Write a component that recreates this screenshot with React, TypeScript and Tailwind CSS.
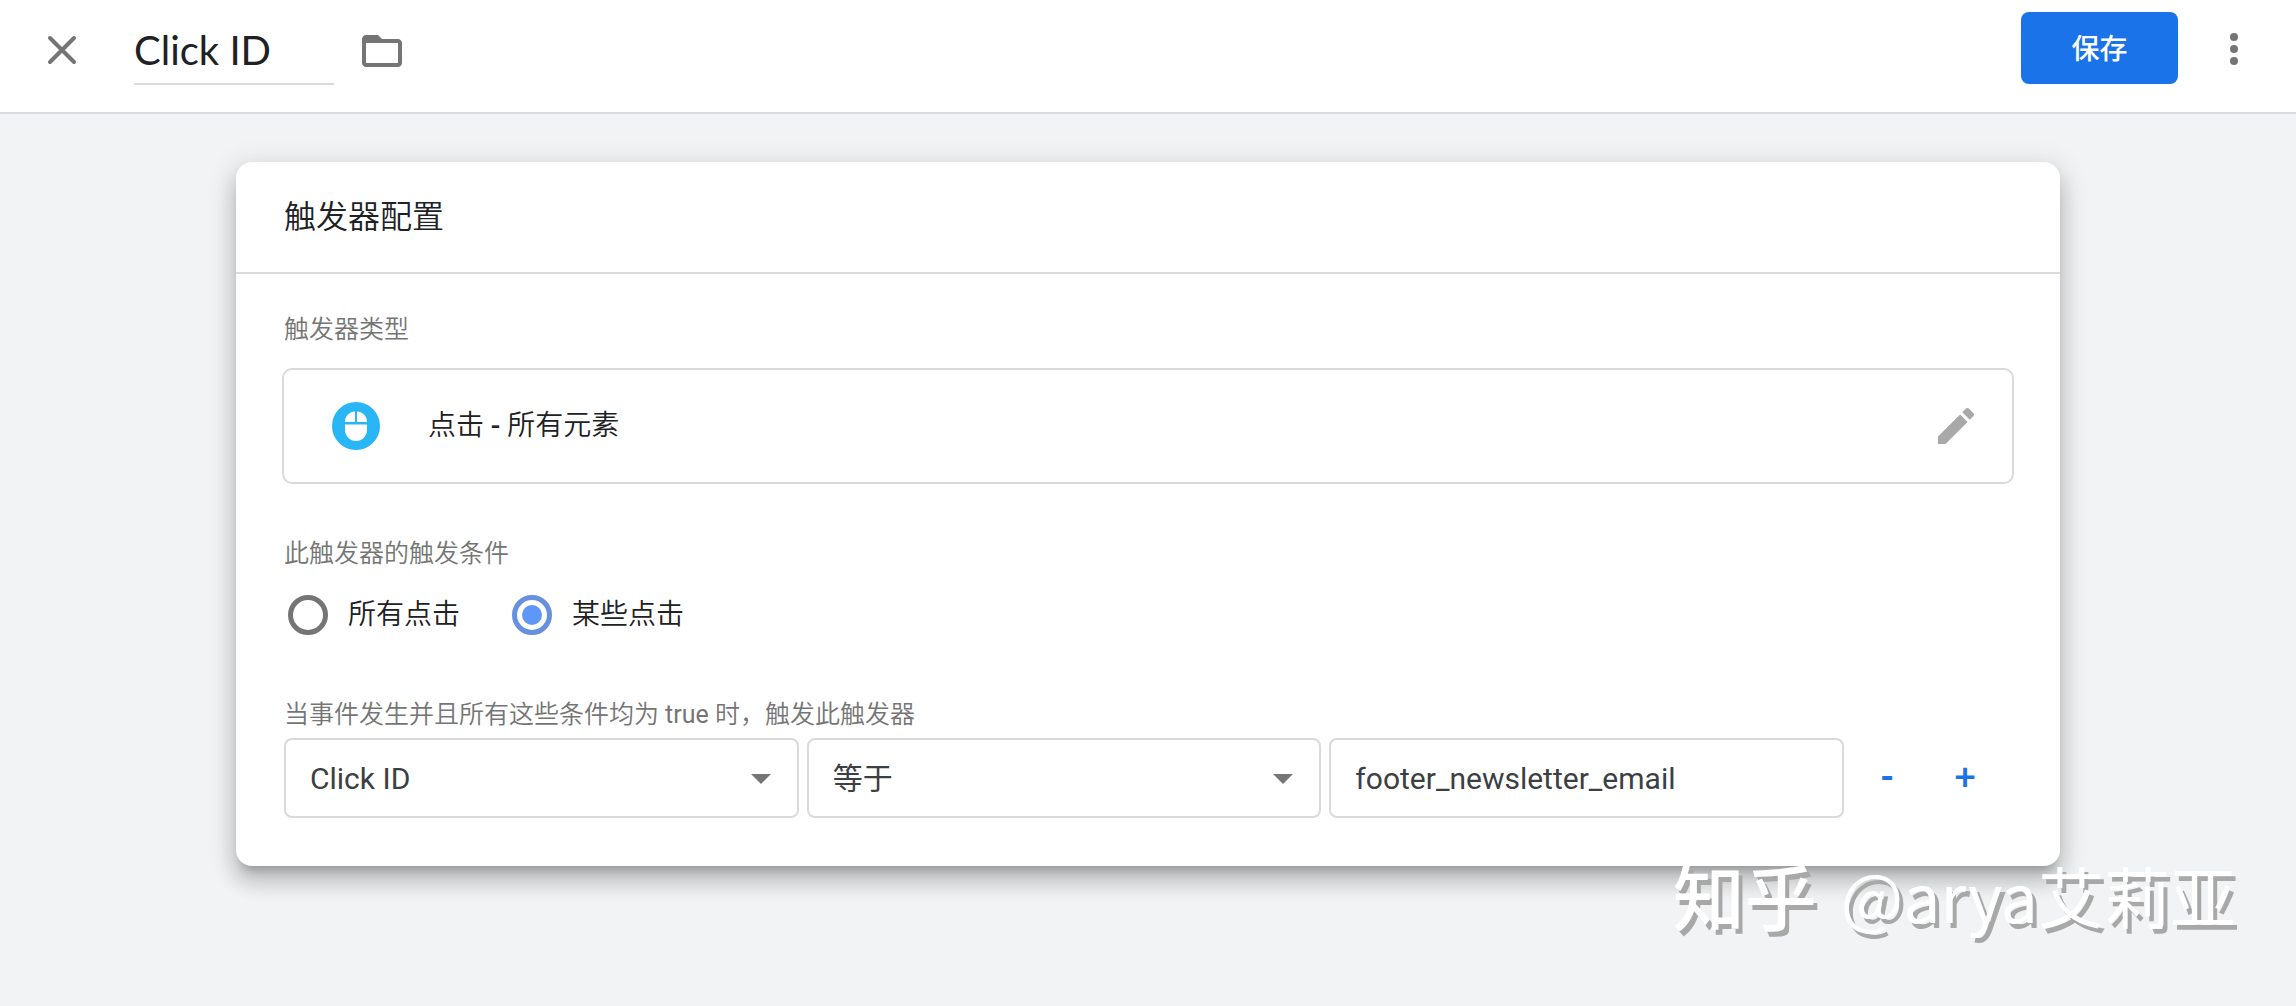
import { useState } from 'react';

const clickOptions = [
  { value: 'all', label: '所有点击' },
  { value: 'some', label: '某些点击' },
];

const boxClass =
  'h-20 w-full rounded-lg border-2 border-[#dadada] bg-white px-6 text-[30px] text-[#3c4043] focus:outline-none';

const captionClass = 'px-0.5 text-[25px] leading-10 font-[350] text-[#757575]';

type SelectBoxProps = {
  label: string;
  options: string[];
};

function SelectBox({ label, options }: SelectBoxProps) {
  const [value, setValue] = useState(options[0]);

  return (
    <div className="relative min-w-0 flex-1">
      <select
        aria-label={label}
        value={value}
        onChange={(e) => setValue(e.target.value)}
        className={`${boxClass} appearance-none`}
      >
        {options.map((option) => (
          <option key={option} value={option}>
            {option}
          </option>
        ))}
      </select>
      <svg
        viewBox="0 0 20 10"
        className="pointer-events-none absolute top-9 right-7 h-[10px] w-5 fill-[#757575]"
      >
        <path d="M0 0h20L10 10z" />
      </svg>
    </div>
  );
}

function Header() {
  const [name, setName] = useState('Click ID');

  return (
    <header className="flex h-[114px] items-start border-b-2 border-[#dadce0] bg-white px-[38px]">
      <button aria-label="关闭" className="mt-[26px]">
        <svg viewBox="0 0 24 24" className="size-12 fill-none stroke-[#757575] stroke-2">
          <path d="M6 6l12 12M18 6L6 18" strokeLinecap="round" />
        </svg>
      </button>
      <input
        type="text"
        aria-label="触发器名称"
        value={name}
        onChange={(e) => setName(e.target.value)}
        className="mt-4 ml-12 h-[69px] w-[200px] border-b-2 border-[#dadada] font-[Lato,sans-serif] text-[40px] text-[#202124] focus:outline-none"
      />
      <button aria-label="移至文件夹" className="mt-[27px] ml-6">
        <svg viewBox="0 0 24 24" className="size-12 fill-[#757575]">
          <path d="M9.17 6l2 2H20v10H4V6h5.17M10 4H4c-1.1 0-1.99.9-1.99 2L2 18c0 1.1.9 2 2 2h16c1.1 0 2-.9 2-2V8c0-1.1-.9-2-2-2h-8l-2-2z" />
          <path d="M4 6h6l2 2H4z" />
        </svg>
      </button>
      <button className="mt-3 ml-auto h-18 w-[157px] rounded-lg bg-[#1a73e8] pt-1 text-[28px] font-medium text-white">
        保存
      </button>
      <button aria-label="更多操作" className="mt-[25px] ml-8">
        <svg viewBox="0 0 24 24" className="size-12 fill-[#757575]">
          <circle cx="12" cy="6" r="2" />
          <circle cx="12" cy="12" r="2" />
          <circle cx="12" cy="18" r="2" />
        </svg>
      </button>
    </header>
  );
}

export default function App() {
  const [clicks, setClicks] = useState('some');
  const [value, setValue] = useState('footer_newsletter_email');

  return (
    <div className="relative min-h-screen bg-[#f1f3f4] font-[Roboto,'Noto_Sans_CJK_SC',sans-serif] text-[#202124]">
      <Header />

      <main className="px-[236px] pt-12 pb-[140px]">
        <section className="rounded-2xl bg-white shadow-[0_16px_20px_2px_rgba(0,0,0,0.14),0_6px_28px_4px_rgba(0,0,0,0.12),0_10px_10px_-6px_rgba(0,0,0,0.2)]">
          <h2 className="flex h-28 items-center border-b-2 border-[#dadce0] px-12 text-[32px] font-[350]">
            触发器配置
          </h2>

          <div className="px-[46px] pt-9 pb-12">
            <h3 className={captionClass}>触发器类型</h3>
            <div className="mt-[18px] flex h-[116px] items-center rounded-[10px] border-2 border-[#dadada] px-12">
              <svg viewBox="0 0 48 48" className="size-12">
                <circle cx="24" cy="24" r="24" fill="#29b6f6" />
                <path d="M23 9.500v10.500H13C13 14 17 10 23 9.500zM25 9.500v10.500h10C35 14 31 10 25 9.500z" fill="#fff" />
                <path d="M13 22.500h22V28a11 11 0 0 1-22 0z" fill="#fff" />
              </svg>
              <span className="ml-12 text-[28px] font-[350]">
                点击 <span className="font-medium">-</span> 所有元素
              </span>
              <button aria-label="修改" className="ml-auto -mr-16 pr-12">
                <svg viewBox="0 0 24 24" className="size-12 fill-[#a8a8a8]">
                  <path d="M3 17.250V21h3.750L17.810 9.940l-3.750-3.750L3 17.250zM20.710 7.040c.39-.39.39-1.020 0-1.410l-2.340-2.340c-.39-.39-1.020-.39-1.410 0l-1.830 1.830 3.750 3.750 1.830-1.830z" />
                </svg>
              </button>
            </div>

            <fieldset className="mt-[50px]">
              <legend className={captionClass}>此触发器的触发条件</legend>
              <div className="flex gap-[52px] px-1.5 pt-[21px]">
                {clickOptions.map((option) => (
                  <label key={option.value} className="flex h-10 items-center gap-5 text-[28px] font-[350]">
                    <input
                      type="radio"
                      name="clicks"
                      value={option.value}
                      checked={clicks === option.value}
                      onChange={() => setClicks(option.value)}
                      className="grid size-10 appearance-none place-items-center rounded-full border-[5px] border-[#757575] before:size-5 before:rounded-full checked:border-[#6691df] checked:before:bg-[#5e97f6]"
                    />
                    {option.label}
                  </label>
                ))}
              </div>
            </fieldset>

            <h3 className={`${captionClass} mt-[60px]`}>
              当事件发生并且所有这些条件均为 <span className="font-normal">true</span> 时，触发此触发器
            </h3>
            <div className="mt-[3px] flex items-center px-0.5">
              <div className="flex min-w-0 flex-1 gap-2">
                <SelectBox label="变量" options={['Click ID', 'Click Classes', 'Click URL']} />
                <SelectBox label="运算符" options={['等于', '包含', '不等于']} />
                <div className="min-w-0 flex-1">
                  <input
                    type="text"
                    aria-label="值"
                    value={value}
                    onChange={(e) => setValue(e.target.value)}
                    className={boxClass}
                  />
                </div>
              </div>
              <div className="mr-2 ml-1 flex pb-1.5 font-[Lato,sans-serif] text-[38px] font-bold text-[#1a73e8]">
                <button aria-label="移除条件" className="w-[78px]">-</button>
                <button aria-label="添加条件" className="w-[78px]">+</button>
              </div>
            </div>
          </div>
        </section>
      </main>

      <div className="absolute right-[60px] bottom-[76px] flex items-center gap-6 font-['Noto_Sans_CJK_SC',sans-serif] leading-none text-white [text-shadow:4px_5px_0_#a8a8a8]">
        <span className="text-[72px] font-medium">知乎</span>
        <span className="text-[66px]">@arya艾莉亚</span>
      </div>
    </div>
  );
}
